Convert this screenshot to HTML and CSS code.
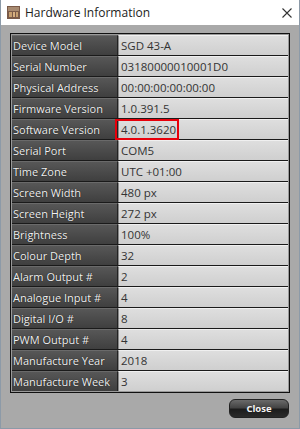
FILE: index.html
```html
<!DOCTYPE html>
<html lang="en">
<head>
  <meta charset="UTF-8">
  <title>Hardware Information</title>
  <link rel="stylesheet" href="styles.css">
</head>
<body>
  <div class="window">
    <div class="titlebar">
      <svg class="app-icon" width="13" height="13" viewBox="0 0 13 13">
        <rect x="0" y="0" width="13" height="13" fill="#7a5a48"/>
        <rect x="1" y="1" width="11" height="4" fill="#a88a70"/>
        <rect x="2" y="6" width="3" height="5" fill="#c8a070"/>
        <rect x="6" y="6" width="2" height="5" fill="#d8b080"/>
        <rect x="9" y="6" width="2" height="5" fill="#c8a070"/>
      </svg>
      <span class="title">Hardware Information</span>
      <svg class="close-x" width="10" height="10" viewBox="0 0 10 10">
        <path d="M0.5 0.5 L9.5 9.5 M9.5 0.5 L0.5 9.5" stroke="#333" stroke-width="1.1"/>
      </svg>
    </div>

    <div class="content">
      <div class="info">
        <div class="row"><div class="key">Device Model</div><div class="val">SGD 43-A</div></div>
        <div class="row"><div class="key">Serial Number</div><div class="val">03180000010001D0</div></div>
        <div class="row"><div class="key">Physical Address</div><div class="val">00:00:00:00:00:00</div></div>
        <div class="row"><div class="key">Firmware Version</div><div class="val">1.0.391.5</div></div>
        <div class="row"><div class="key">Software Version</div><div class="val"><span class="mark"></span>4.0.1.3620</div></div>
        <div class="row"><div class="key">Serial Port</div><div class="val">COM5</div></div>
        <div class="row"><div class="key">Time Zone</div><div class="val">UTC +01:00</div></div>
        <div class="row"><div class="key">Screen Width</div><div class="val">480 px</div></div>
        <div class="row"><div class="key">Screen Height</div><div class="val">272 px</div></div>
        <div class="row"><div class="key">Brightness</div><div class="val">100%</div></div>
        <div class="row"><div class="key">Colour Depth</div><div class="val">32</div></div>
        <div class="row"><div class="key">Alarm Output #</div><div class="val">2</div></div>
        <div class="row"><div class="key">Analogue Input #</div><div class="val">4</div></div>
        <div class="row"><div class="key">Digital I/O #</div><div class="val">8</div></div>
        <div class="row"><div class="key">PWM Output #</div><div class="val">4</div></div>
        <div class="row"><div class="key">Manufacture Year</div><div class="val">2018</div></div>
        <div class="row"><div class="key">Manufacture Week</div><div class="val">3</div></div>
      </div>

      <div class="footer">
        <button class="btn-close">Close</button>
      </div>
    </div>
  </div>
</body>
</html>
```

FILE: styles.css
```css
* {
  margin: 0;
  padding: 0;
  box-sizing: border-box;
}

body {
  width: 300px;
  height: 429px;
  overflow: hidden;
  font-family: "Open Sans", "Noto Sans", sans-serif;
}

.window {
  width: 300px;
  height: 429px;
  background: #a9a9a9;
  border: 1px solid #8c9aa8;
  border-top: none;
  display: flex;
  flex-direction: column;
}

.titlebar {
  height: 25px;
  background: #ffffff;
  display: flex;
  align-items: center;
  padding-left: 6px;
  padding-right: 7px;
}

.app-icon {
  margin-right: 5px;
}

.title {
  font-size: 12px;
  color: #222;
  flex: 1;
}

.content {
  padding: 8px 9px 0 9px;
}

.info {
  border: 1px solid #111;
  box-shadow: inset 0 0 0 1px #9a9a9a;
  padding: 1px;
  background: #1e1e1e;
}

.row {
  display: flex;
  height: 21px;
  border-bottom: 1px solid #1a1a1a;
}

.row:last-child {
  border-bottom: none;
  height: 20px;
}

.key {
  width: 106px;
  background: linear-gradient(#575757, #3f3f3f);
  border-top: 1px solid #6a6a6a;
  border-right: 1px solid #222;
  color: #f2f2f2;
  font-size: 11px;
  line-height: 19px;
  padding-left: 1px;
  white-space: nowrap;
  text-shadow: 0 0 1px #000;
}

.val {
  position: relative;
  flex: 1;
  background: linear-gradient(#dedede, #cfcfcf);
  border-top: 1px solid #f0f0f0;
  border-left: 1px solid #888;
  color: #333;
  font-size: 11.5px;
  line-height: 19px;
  padding-left: 2px;
}

.mark {
  position: absolute;
  left: -4px;
  top: -1px;
  width: 64px;
  height: 21px;
  border: 2px solid #e8000b;
}

.footer {
  display: flex;
  justify-content: flex-end;
  padding-top: 6px;
  padding-right: 1px;
}

.btn-close {
  width: 60px;
  height: 19px;
  border: 1px solid #222;
  border-radius: 6px;
  background: linear-gradient(#6a6a6a 0%, #444 45%, #1c1c1c 55%, #2a2a2a 100%);
  color: #f4f4f4;
  font-family: "Open Sans", sans-serif;
  font-size: 9.5px;
  font-weight: bold;
}
```
